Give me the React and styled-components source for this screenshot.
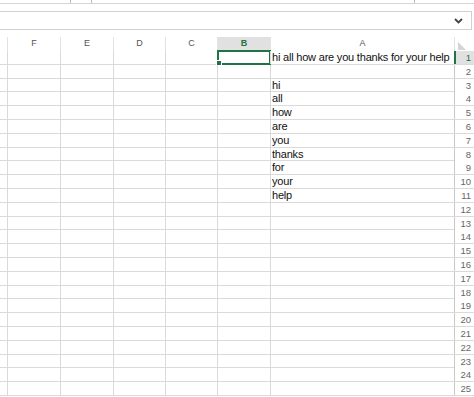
import styled, { createGlobalStyle } from "styled-components"

const GlobalStyle = createGlobalStyle`
  html, body {
    margin: 0;
    padding: 0;
    background: #ffffff;
    overflow: hidden;
  }
  body {
    font-family: "Liberation Sans", Arial, sans-serif;
  }
`

const GREEN = '#217346'
const LINE = '#dadada'
const COLS = '7px 53px 53px 52px 52px 53px 184px 20px'

const Page = styled.div`
  width: 474px;
  height: 397px;
  overflow: hidden;
  display: flex;
  flex-direction: column;
`

const Ribbon = styled.div`
  display: flex;
  height: 3px;
  border-bottom: 1px solid #d6d6d6;
`

const RibbonPart = styled.div`
  width: ${props => props.$w}px;
  flex: ${props => props.$w ? 'none' : '1'};
  border-right: ${props => props.$tick ? '1px solid #bdbdbd' : 'none'};
`

const FormulaBar = styled.div`
  margin-top: 7px;
  height: 17px;
  margin-right: 2px;
  border: 1px solid #d0d0d0;
  border-left: none;
  display: flex;
  align-items: center;
  justify-content: flex-end;
  padding-right: 8px;
`

const HeaderRow = styled.div`
  margin-top: 7px;
  display: grid;
  grid-template-columns: ${COLS};
  height: 14px;
  border-bottom: 1px solid #c8c8c8;
  box-sizing: border-box;
`

const ColHead = styled.div`
  box-sizing: border-box;
  border-left: ${props => props.$first ? 'none' : '1px solid #e2e2e2'};
  font-size: 9px;
  line-height: 13px;
  text-align: center;
  color: ${props => props.$active ? GREEN : '#555'};
  font-weight: ${props => props.$active ? 'bold' : 'normal'};
  background: ${props => props.$active ? '#e1e1e1' : '#fff'};
  border-bottom: ${props => props.$active ? `1px solid ${GREEN}` : 'none'};
  position: relative;
`

const Corner = styled.div`
  position: absolute;
  left: 3px;
  top: 5px;
  width: 0;
  height: 0;
  border-left: 8px solid #d4d4d4;
  border-top: 8px solid transparent;
`

const Row = styled.div`
  display: grid;
  grid-template-columns: ${COLS};
  height: 13.8px;
  border-bottom: 1px solid ${LINE};
  box-sizing: border-box;
  flex: none;
`

const Cell = styled.div`
  box-sizing: border-box;
  border-left: ${props => props.$first ? 'none' : `1px solid ${LINE}`};
  font-size: 11px;
  letter-spacing: -0.2px;
  line-height: 13px;
  color: #111;
  padding-left: 1px;
  white-space: nowrap;
  overflow: ${props => props.$selected ? 'visible' : 'hidden'};
  position: relative;
`

const Selected = styled.div`
  position: absolute;
  left: -1px;
  top: -1px;
  right: -1px;
  bottom: -1px;
  border: 2px solid ${GREEN};
`

const Handle = styled.div`
  position: absolute;
  left: -3px;
  bottom: -3px;
  width: 4px;
  height: 4px;
  background: ${GREEN};
  border: 1px solid #fff;
`

const RowHead = styled.div`
  box-sizing: border-box;
  border-left: ${props => props.$active ? `2px solid ${GREEN}` : '1px solid #c8c8c8'};
  background: ${props => props.$active ? '#e1e1e1' : '#fff'};
  color: ${props => props.$active ? GREEN : '#666'};
  font-size: 9.5px;
  line-height: 13px;
  text-align: right;
  padding-right: 3px;
`

const words = {
  1: 'hi all how are you thanks for your help',
  3: 'hi',
  4: 'all',
  5: 'how',
  6: 'are',
  7: 'you',
  8: 'thanks',
  9: 'for',
  10: 'your',
  11: 'help'
}

function Chevron () {
  return (
    <svg width="9" height="6" viewBox="0 0 9 6">
      <path d="M1 1 L4.5 4.5 L8 1" fill="none" stroke="#444" strokeWidth="1.8" />
    </svg>
  )
}

function App () {
  const rows = Array.from({ length: 25 }, (_, i) => i + 1)

  return (
    <Page>
      <GlobalStyle />
      <Ribbon>
        <RibbonPart $w={70} $tick />
        <RibbonPart $w={20} $tick />
        <RibbonPart $w={322} $tick />
        <RibbonPart />
      </Ribbon>
      <FormulaBar>
        <Chevron />
      </FormulaBar>
      <HeaderRow>
        <ColHead $first />
        <ColHead>F</ColHead>
        <ColHead>E</ColHead>
        <ColHead>D</ColHead>
        <ColHead>C</ColHead>
        <ColHead $active>B</ColHead>
        <ColHead>A</ColHead>
        <ColHead><Corner /></ColHead>
      </HeaderRow>
      {rows.map(n => (
        <Row key={n}>
          <Cell $first />
          <Cell />
          <Cell />
          <Cell />
          <Cell />
          <Cell $selected={n === 1}>
            {n === 1 && (
              <Selected>
                <Handle />
              </Selected>
            )}
          </Cell>
          <Cell>{words[n]}</Cell>
          <RowHead $active={n === 1}>{n}</RowHead>
        </Row>
      ))}
    </Page>
  )
}

export default App
